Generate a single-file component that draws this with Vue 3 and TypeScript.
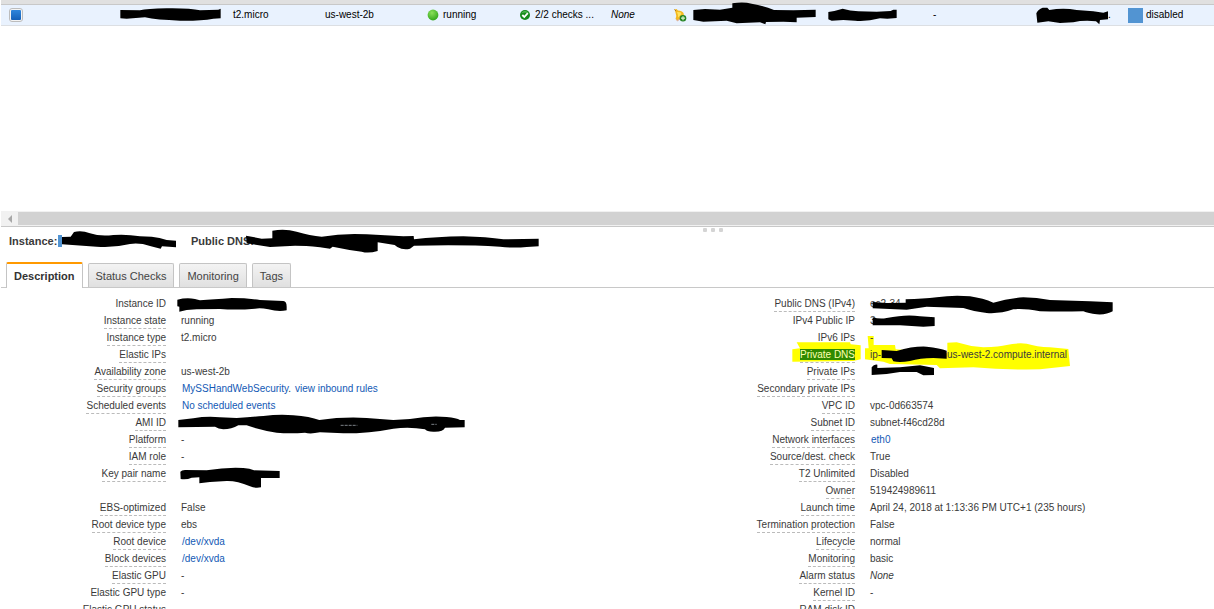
<script setup lang="ts">
import { ref } from 'vue'

interface Mark {
  box: [number, number, number, number]
  dx: number
  dy: number
  d: string
}

interface Field {
  label: string
  hint?: boolean
  value?: string
  link?: string
  extraLink?: string
  italic?: boolean
  mark?: string
  highlight?: boolean
  tail?: string
}

// Pen strokes are drawn at three units to the pixel.
const marks: Record<string, Mark> = {
  rowName: { box: [360, 21, 303, 42], dx: 0, dy: 2, d: 'M361 30L420 31Q440 26 500 25Q570 24 600 31L655 29L662 26L662 55L640 56Q600 63 540 62Q470 60 435 52L380 56L361 55Z' },
  rowAlarm: { box: [879, 6, 369, 69], dx: 21, dy: -3, d: 'M880 30L915 27L960 29L997 23L997 10Q1030 5 1055 11Q1090 17 1122 30L1180 31L1247 29L1247 51L1190 53L1190 67L1150 65L1098 66L1096 73L1080 67L1010 70L980 62L910 65L880 60Z' },
  rowIp: { box: [84, 24, 207, 42], dx: 1, dy: 3, d: 'M85 36Q105 33 128 26Q150 32 175 34L230 35L272 33L280 29L290 29L290 54L262 56L240 55Q200 65 165 62L130 60L95 62L85 58Z' },
  rowKey: { box: [708, 21, 216, 54], dx: 1, dy: 2, d: 'M709 40Q714 28 728 23L742 23L748 30Q790 22 830 30L880 34L910 38L924 34L924 58L900 60L898 73L888 64Q850 60 820 67L780 69L745 64L712 68Z' },
  headId: { box: [186, 78, 342, 57], dx: 0, dy: -3, d: 'M186 99L212 98L222 84Q245 78 270 88Q300 98 340 93Q380 90 420 97L455 98Q480 100 500 108L528 110L528 130L486 127L482 134L450 126Q420 116 390 120Q340 132 290 128L186 121Z' },
  headDns: { box: [48, 72, 879, 72], dx: 55, dy: -4, d: 'M48 92L95 101L127 100L127 77Q165 70 200 80Q240 92 275 95Q340 84 410 88L520 94L551 93L552 103Q620 95 700 94Q770 96 820 103L926 101L926 124L890 126Q850 130 810 125Q700 118 552 122L540 131Q520 136 502 126L494 120L443 112L443 138Q415 146 395 140Q350 134 308 125L300 131L270 127Q200 120 165 124L120 126L50 115Z' },
  instanceId: { box: [351, 21, 330, 45], dx: -4, dy: 2, d: 'M352 29Q380 22 405 27L420 31Q460 28 515 24Q560 24 600 30L670 33Q680 34 680 50L680 61Q655 66 625 58Q600 52 585 56Q530 61 480 57L410 58L380 60L358 65L358 50L352 49Z' },
  ami: { box: [354, 42, 861, 60], dx: -3, dy: 0, d: 'M355 60L400 55Q440 48 480 52L530 54Q580 50 610 48Q660 42 700 46Q750 50 778 60Q850 50 920 54L1000 60L1050 57Q1110 46 1160 51Q1190 54 1200 60L1214 60L1214 82L1155 83Q1150 95 1125 95Q1100 96 1095 88Q1050 80 1000 86Q930 100 850 100L780 97Q750 103 735 98Q690 102 650 98Q600 90 560 76L535 76Q515 88 490 88Q475 86 465 80L355 82Z' },
  keyPair: { box: [360, 201, 300, 63], dx: -1, dy: 2, d: 'M361 215Q365 210 375 210L440 211Q500 201 550 204Q570 205 582 211L659 213L659 234L603 234L603 262Q585 265 570 259Q530 242 500 243L450 246L418 250L418 232L395 233Q380 240 362 237Z' },
  publicDns: { box: [396, 15, 723, 60], dx: 2, dy: 0, d: 'M398 36L440 39L497 38L497 28Q550 27 590 22Q640 14 690 19Q730 25 760 38Q800 26 850 22Q890 22 930 30L1050 34L1118 37L1118 64Q1100 75 1070 73Q1045 70 1030 64Q960 65 900 64Q850 54 820 58Q780 72 740 69Q700 64 670 54L560 50L500 59L398 55Z' },
  publicIp: { box: [396, 75, 189, 36], dx: 2, dy: 3, d: 'M398 82Q420 88 440 84Q500 72 540 79L584 82L584 108L550 110L480 106L430 106L398 106Z' },
  privateDns: { box: [423, 168, 198, 48], dx: 11, dy: 0, d: 'M425 180L470 183Q520 168 560 170Q600 174 620 182L620 206L580 204Q540 204 510 213Q480 218 460 214L455 205L425 204Z' },
  privateIp: { box: [393, 222, 189, 36], dx: 1, dy: 1, d: 'M395 232Q402 222 412 224L412 234L480 232L540 226L582 234L582 255L550 256L530 246L480 246L440 252L395 255Z' },
  glowLabel: { box: [156, 156, 207, 60], dx: -8, dy: -4, d: 'M170 157L330 157L332 163L362 166L362 208L340 213L157 215L157 178L180 175Z' },
  glowValue: { box: [375, 138, 615, 102], dx: -5, dy: -10, d: 'M383 138L401 138L401 165L465 165L467 178L622 190L622 158L650 157Q690 170 730 172Q780 170 800 165Q830 158 860 161Q890 170 930 172L985 177L990 228L900 238Q800 240 700 232L600 235L590 225L450 222L430 215L375 208L375 175L386 175Z' },
}

const place = (name: string) => {
  const m = marks[name]
  return {
    left: `${m.dx}px`,
    top: `${m.dy}px`,
    width: `${m.box[2] / 3}px`,
    height: `${m.box[3] / 3}px`,
  }
}
const viewBox = (name: string) => marks[name].box.join(' ')

const tabs = ['Description', 'Status Checks', 'Monitoring', 'Tags']
const activeTab = ref('Description')
const selected = ref(true)

const columns: Field[][] = [
  [
    { label: 'Instance ID', hint: false, mark: 'instanceId' },
    { label: 'Instance state', value: 'running' },
    { label: 'Instance type', value: 't2.micro' },
    { label: 'Elastic IPs' },
    { label: 'Availability zone', value: 'us-west-2b' },
    { label: 'Security groups', link: 'MySSHandWebSecurity', extraLink: 'view inbound rules' },
    { label: 'Scheduled events', link: 'No scheduled events' },
    { label: 'AMI ID', mark: 'ami' },
    { label: 'Platform', value: '-' },
    { label: 'IAM role', value: '-' },
    { label: 'Key pair name', mark: 'keyPair' },
    { label: '' },
    { label: 'EBS-optimized', value: 'False' },
    { label: 'Root device type', value: 'ebs' },
    { label: 'Root device', link: '/dev/xvda' },
    { label: 'Block devices', link: '/dev/xvda' },
    { label: 'Elastic GPU', value: '-' },
    { label: 'Elastic GPU type', hint: false, value: '-' },
    { label: 'Elastic GPU status', hint: false },
  ],
  [
    { label: 'Public DNS (IPv4)', value: 'ec2-34-', mark: 'publicDns' },
    { label: 'IPv4 Public IP', hint: false, value: '3', mark: 'publicIp' },
    { label: 'IPv6 IPs', hint: false, value: '-' },
    { label: 'Private DNS', value: 'ip-', mark: 'privateDns', highlight: true, tail: 'us-west-2.compute.internal' },
    { label: 'Private IPs', mark: 'privateIp' },
    { label: 'Secondary private IPs' },
    { label: 'VPC ID', value: 'vpc-0d663574' },
    { label: 'Subnet ID', value: 'subnet-f46cd28d' },
    { label: 'Network interfaces', link: 'eth0' },
    { label: 'Source/dest. check', value: 'True' },
    { label: 'T2 Unlimited', value: 'Disabled' },
    { label: 'Owner', value: '519424989611' },
    { label: 'Launch time', value: 'April 24, 2018 at 1:13:36 PM UTC+1 (235 hours)' },
    { label: 'Termination protection', value: 'False' },
    { label: 'Lifecycle', value: 'normal' },
    { label: 'Monitoring', value: 'basic' },
    { label: 'Alarm status', value: 'None', italic: true },
    { label: 'Kernel ID', value: '-' },
    { label: 'RAM disk ID', hint: false },
  ],
]
</script>

<template>
  <main class="console">
    <section class="list">
      <div class="list-edge"></div>
      <table class="instances">
        <colgroup>
          <col class="c-check" /><col class="c-name" /><col class="c-id" /><col class="c-std" />
          <col class="c-zone" /><col class="c-std" /><col class="c-std" /><col class="c-alarm" />
          <col class="c-dns" /><col class="c-ip" /><col class="c-ipv6" /><col class="c-std" /><col />
        </colgroup>
        <tbody>
          <tr>
            <td><input v-model="selected" class="pick" type="checkbox" aria-label="Select instance" /></td>
            <td></td>
            <td><svg class="ink" :style="place('rowName')" :viewBox="viewBox('rowName')"><path :d="marks.rowName.d" /></svg></td>
            <td>t2.micro</td>
            <td>us-west-2b</td>
            <td>
              <div class="state">
                <svg class="icon" viewBox="0 0 12 12">
                  <defs>
                    <radialGradient id="ball" cx=".4" cy=".3" r=".7"><stop offset="0" stop-color="#8be05a" /><stop offset="1" stop-color="#35a81d" /></radialGradient>
                  </defs>
                  <circle cx="6" cy="6" r="5.4" fill="url(#ball)" />
                </svg>
                <span>running</span>
              </div>
            </td>
            <td>
              <div class="state">
                <svg class="icon" viewBox="0 0 12 12">
                  <circle cx="6" cy="6" r="5" fill="#168a1c" />
                  <path d="M2.2 4.2Q6-.2 9.8 4.2Q6 2.6 2.2 4.2Z" fill="#55b956" />
                  <path d="M3.3 6L5.3 8L8.8 4.2" fill="none" stroke="#fff" stroke-width="1.8" />
                </svg>
                <span>2/2 checks ...</span>
              </div>
            </td>
            <td class="none">None</td>
            <td>
              <svg class="bell" viewBox="0 0 14 14">
                <path d="M1.5 1.5L3.5 1L5 2.5Q9 2.5 10.5 5L11 7.5L4.5 12.5L2.5 11Q4 8 2.5 4.5Z" fill="#f3b922" />
                <path d="M4 4L7.5 4.2L8.5 6L5 9.5Q5.2 6.5 4 4Z" fill="#ffe45e" />
                <path d="M1.5 1.5L3 3" stroke="#a5702a" />
                <path d="M3 11.5L4.5 12.7L7 11" fill="none" stroke="#d9a08a" />
                <circle cx="10" cy="10.2" r="3.3" fill="#258323" />
                <path d="M8 10.2H12M10 8.2V12.2" stroke="#d8f3c8" stroke-width="1.2" />
              </svg>
              <svg class="ink" :style="place('rowAlarm')" :viewBox="viewBox('rowAlarm')"><path :d="marks.rowAlarm.d" /></svg>
            </td>
            <td><svg class="ink" :style="place('rowIp')" :viewBox="viewBox('rowIp')"><path :d="marks.rowIp.d" /></svg></td>
            <td>-</td>
            <td class="key"><svg class="ink" :style="place('rowKey')" :viewBox="viewBox('rowKey')"><path :d="marks.rowKey.d" /></svg>.</td>
            <td><div class="monitor"><i class="patch"></i><span>disabled</span></div></td>
          </tr>
        </tbody>
      </table>
    </section>

    <div class="scroll">
      <button class="scroll-left" type="button" aria-label="Scroll left">
        <svg viewBox="0 0 4 8"><path d="M4 0V8L0 4Z" fill="#a8a8a8" /></svg>
      </button>
      <div class="thumb"></div>
    </div>
    <div class="splitter"><i></i><i></i><i></i></div>

    <section class="details">
      <h1 class="title">
        <span class="title-id">Instance:</span>
        <i class="cursor"></i>
        <span class="anchor id-space"><svg class="ink" :style="place('headId')" :viewBox="viewBox('headId')"><path :d="marks.headId.d" /></svg></span>
        <span class="anchor">Public DNS:<svg class="ink" :style="place('headDns')" :viewBox="viewBox('headDns')"><path :d="marks.headDns.d" /></svg></span>
      </h1>

      <nav class="tabs" role="tablist">
        <button
          v-for="tab in tabs"
          :key="tab"
          type="button"
          role="tab"
          class="tab"
          :class="{ active: tab === activeTab }"
          :aria-selected="tab === activeTab"
          @click="activeTab = tab"
        >{{ tab }}</button>
      </nav>

      <div class="panels">
        <dl v-for="(fields, c) in columns" :key="c" class="panel">
          <div v-for="(f, i) in fields" :key="i" class="field">
            <dt>
              <span v-if="f.label" class="label" :class="{ hinted: f.hint !== false }">
                <svg v-if="f.highlight" class="glow" :style="place('glowLabel')" :viewBox="viewBox('glowLabel')"><path :d="marks.glowLabel.d" /></svg>
                <mark v-if="f.highlight">{{ f.label }}</mark>
                <template v-else>{{ f.label }}</template>
              </span>
            </dt>
            <dd :class="{ none: f.italic }">
              <svg v-if="f.highlight" class="glow" :style="place('glowValue')" :viewBox="viewBox('glowValue')"><path :d="marks.glowValue.d" /></svg>
              <span v-if="f.value" :class="{ lead: f.tail }">{{ f.value }}</span>
              <template v-if="f.tail">{{ f.tail }}</template>
              <a v-if="f.link" href="#">{{ f.link }}</a>
              <template v-if="f.extraLink">. <a href="#">{{ f.extraLink }}</a></template>
              <svg v-if="f.mark" class="ink" :style="place(f.mark)" :viewBox="viewBox(f.mark)">
                <path :d="marks[f.mark].d" />
                <path v-if="f.mark === 'ami'" class="glint" d="M842 76H892M1114 73H1130" />
              </svg>
            </dd>
          </div>
        </dl>
      </div>
    </section>
  </main>
</template>

<style>
body { margin: 0; background: #fff; }
</style>

<style scoped>
.console {
  display: flex;
  flex-direction: column;
  box-sizing: border-box;
  height: 100vh;
  padding-left: 1px;
  overflow: hidden;
  color: #3a3a3a;
  font: 10px/18px "Liberation Sans", Arial, sans-serif;
}
.list { flex: none; height: 211px; }
.list-edge { height: 4px; background: #e0e0e0; border-bottom: 1px solid #c8c8c8; }
.instances { width: 100%; table-layout: fixed; border-collapse: separate; border-spacing: 0; color: #000; }
.instances td {
  position: relative;
  height: 20px;
  padding: 0 0 0 1px;
  line-height: 20px;
  white-space: nowrap;
  background: #e9f2fe;
  border-bottom: 1px solid #dcdfe3;
}
.c-check { width: 31px; }
.c-name { width: 88px; }
.c-id { width: 112px; }
.c-std { width: 92px; }
.c-zone { width: 102px; }
.c-alarm { width: 62px; }
.c-dns { width: 155px; }
.c-ip { width: 105px; }
.c-ipv6 { width: 103px; }
.pick {
  display: block;
  appearance: none;
  box-sizing: border-box;
  width: 14px;
  height: 14px;
  margin: 0 0 0 7px;
  background: #f4f4f4;
  border: 1px solid #bcbcbc;
  border-radius: 3px;
}
.pick:checked { background: linear-gradient(#2f86dc, #1560b8) content-box, #f4f4f4; padding: 1px; }
.state, .monitor { display: flex; align-items: center; }
.state { gap: 4px; }
.icon { width: 12px; height: 12px; }
.bell { display: block; width: 14px; height: 14px; }
.none { font-style: italic; }
.instances .key { padding-left: 73px; }
.patch { width: 15px; height: 15px; margin-right: 3px; background: #5294d2; }

.ink, .glow { position: absolute; overflow: visible; }
.ink { fill: #000; z-index: 1; }
.glow { fill: #ff0; z-index: -1; }
.glint { stroke: #b9c3cc; stroke-width: 2; stroke-dasharray: 9 3; }

.scroll { flex: none; display: flex; height: 13px; padding: 1px 0; background: #f1f1f1; }
.scroll-left {
  display: flex;
  align-items: center;
  justify-content: center;
  width: 17px;
  padding: 0;
  background: #f1f1f1;
  border: 0;
}
.scroll-left svg { width: 4px; height: 8px; }
.thumb { flex: 1; background: #d2d2d2; }
.splitter {
  flex: none;
  display: flex;
  justify-content: center;
  gap: 4px;
  height: 5px;
  padding: 1px 0 0 211px;
  border-top: 1px solid #c8c8c8;
}
.splitter i { width: 4px; height: 4px; background: #d4d4d4; border-radius: 1px; }

.details { flex: none; }
.title { display: flex; align-items: center; height: 16px; margin: 0; padding: 0 8px; font-size: 11px; line-height: 16px; }
.title-id { width: 49px; }
.cursor { width: 4px; height: 12px; background: #5294d2; }
.anchor { position: relative; height: 16px; white-space: nowrap; }
.id-space { width: 129px; }
.tabs { display: flex; align-items: flex-end; gap: 5px; height: 25px; margin-top: 13px; padding-left: 5px; border-bottom: 1px solid #c8c8c8; }
.tab {
  box-sizing: border-box;
  height: 24px;
  padding: 0 7px;
  color: #444;
  font: 11px/16px "Liberation Sans", Arial, sans-serif;
  background: linear-gradient(#f3f3f3, #e0e0e0);
  border: 1px solid #c4c4c4;
  border-bottom: 0;
  border-radius: 2px 2px 0 0;
}
.tab.active { height: 26px; margin-bottom: -1px; color: #333; font-weight: bold; background: #fff; border-top: 2px solid #f90; }

.panels { display: grid; grid-template-columns: 688fr 525fr; padding-top: 7px; isolation: isolate; }
.panel { margin: 0; }
.field { display: grid; grid-template-columns: 165px 1fr; column-gap: 15px; height: 17px; }
.panel + .panel .field { grid-template-columns: 166px 1fr; }
dt { text-align: right; white-space: nowrap; }
dd { position: relative; margin: 0; white-space: nowrap; }
.label { position: relative; display: inline-block; height: 16px; }
.hinted { border-bottom: 1px dashed #bbb; }
mark { color: #ffffb0; background: #2f8a00; }
a { padding-left: 1px; color: #1259b5; text-decoration: none; }
.lead { display: inline-block; width: 77px; }
</style>
